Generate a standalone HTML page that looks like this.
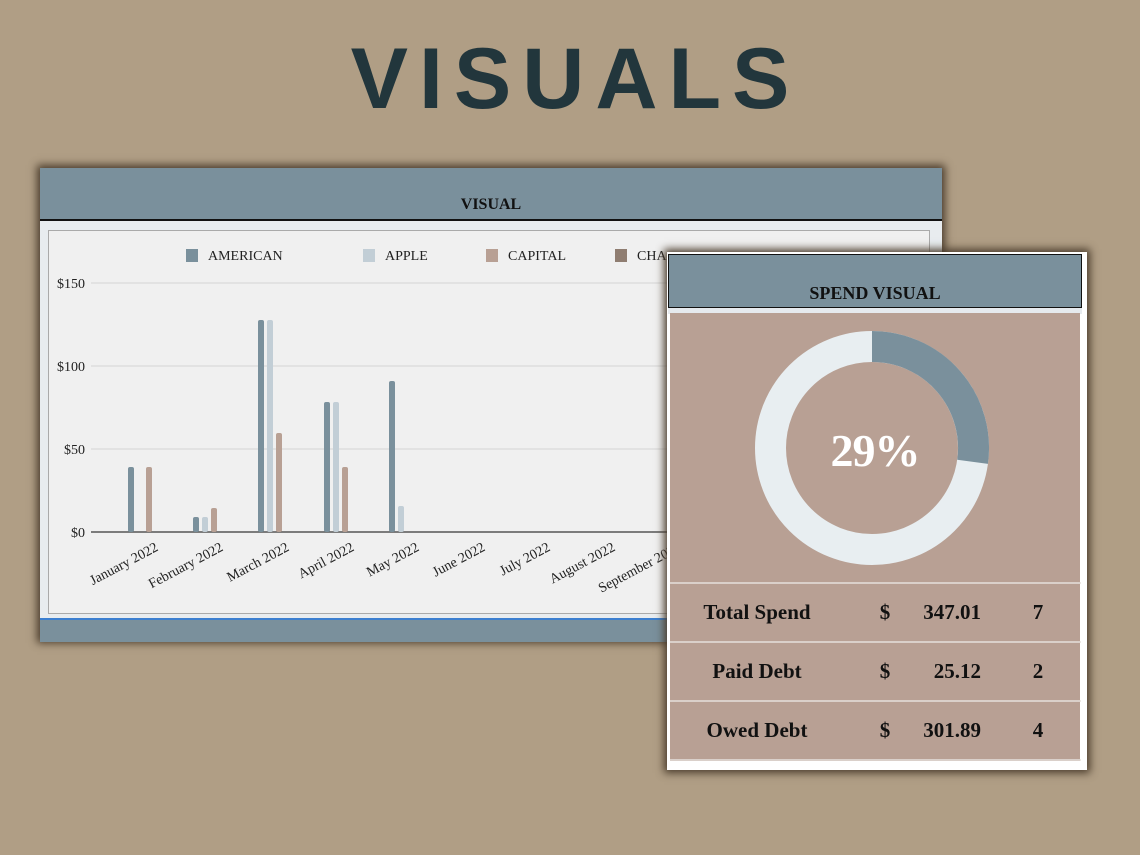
<!DOCTYPE html><html><head><style>
body{margin:0;width:1140px;height:855px;background:#b09e85;position:relative;overflow:hidden;font-family:"Liberation Serif",serif}
.t{position:absolute;left:0;width:1140px;top:30px;text-align:center;font:bold 86px "Liberation Sans",sans-serif;letter-spacing:11px;color:#22363c;padding-left:11px;box-sizing:border-box}
.p1{position:absolute;left:40px;top:168px;width:902px;height:472px;background:#e8ecef;box-shadow:0 0 8px 3px #4a3c2c}
.p2{position:absolute;left:667px;top:252px;width:420px;height:518px;background:#fff;box-shadow:0 0 8px 3px #4a3c2c}
</style></head><body>
<div class="t">VISUALS</div>
<div class="p1">
<div style="position:absolute;left:0;top:0;width:902px;height:51px;background:#7a909c;border-bottom:2px solid #111"></div>
<div style="position:absolute;left:0;top:28px;width:902px;text-align:center;font-weight:bold;font-size:16px;color:#111">VISUAL</div>
<div style="position:absolute;left:8px;top:62px;width:880px;height:382px;background:#f0f0f0;border:1px solid #aaa"></div>
<div style="position:absolute;left:0;top:450px;width:902px;height:22px;background:#7a909c;border-top:2px solid #3b7fd0"></div>
</div>
<svg style="position:absolute;left:0;top:0" width="1140" height="855" font-family="Liberation Serif, serif" font-size="14">
<g fill="#222">
<rect x="186" y="249" width="12" height="13" fill="#7a909c"/><text x="208" y="260">AMERICAN</text>
<rect x="363" y="249" width="12" height="13" fill="#c2ced6"/><text x="385" y="260">APPLE</text>
<rect x="486" y="249" width="12" height="13" fill="#b8a094"/><text x="508" y="260">CAPITAL</text>
<rect x="615" y="249" width="12" height="13" fill="#8f7d71"/><text x="637" y="260">CHA</text>
<text x="85" y="288" text-anchor="end">$150</text><text x="85" y="371" text-anchor="end">$100</text>
<text x="85" y="454" text-anchor="end">$50</text><text x="85" y="537" text-anchor="end">$0</text>
</g>
<g stroke="#d4d4d4"><line x1="91" y1="283" x2="670" y2="283"/><line x1="91" y1="366" x2="670" y2="366"/><line x1="91" y1="449" x2="670" y2="449"/></g>
<line x1="91" y1="532" x2="670" y2="532" stroke="#555" stroke-width="1.5"/>
<g fill="#7a909c"><rect x="128" y="467" width="6" height="65" rx="2"/><rect x="193" y="517" width="6" height="15" rx="2"/><rect x="258" y="320" width="6" height="212" rx="2"/><rect x="324" y="402" width="6" height="130" rx="2"/><rect x="389" y="381" width="6" height="151" rx="2"/></g>
<g fill="#c2ced6"><rect x="202" y="517" width="6" height="15" rx="2"/><rect x="267" y="320" width="6" height="212" rx="2"/><rect x="333" y="402" width="6" height="130" rx="2"/><rect x="398" y="506" width="6" height="26" rx="2"/></g>
<g fill="#b8a094"><rect x="146" y="467" width="6" height="65" rx="2"/><rect x="211" y="508" width="6" height="24" rx="2"/><rect x="276" y="433" width="6" height="99" rx="2"/><rect x="342" y="467" width="6" height="65" rx="2"/></g>
<g fill="#222">
<text transform="translate(159,550) rotate(-28)" text-anchor="end">January 2022</text>
<text transform="translate(224,550) rotate(-28)" text-anchor="end">February 2022</text>
<text transform="translate(290,550) rotate(-28)" text-anchor="end">March 2022</text>
<text transform="translate(355,550) rotate(-28)" text-anchor="end">April 2022</text>
<text transform="translate(420,550) rotate(-28)" text-anchor="end">May 2022</text>
<text transform="translate(486,550) rotate(-28)" text-anchor="end">June 2022</text>
<text transform="translate(551,550) rotate(-28)" text-anchor="end">July 2022</text>
<text transform="translate(616,550) rotate(-28)" text-anchor="end">August 2022</text>
<text transform="translate(682,550) rotate(-28)" text-anchor="end">September 2022</text>
</g>
</svg>
<div class="p2">
<div style="position:absolute;left:1px;top:2px;width:412px;height:52px;background:#7a909c;border:1px solid #111"></div>
<div style="position:absolute;left:0;top:31px;width:416px;text-align:center;font-weight:bold;font-size:18px;color:#111">SPEND VISUAL</div>
<div style="position:absolute;left:1px;top:56px;width:414px;height:6px;background:#e6eaee"></div>
<div style="position:absolute;left:3px;top:61px;width:410px;height:448px;background:#b8a094"></div>
</div>
<svg style="position:absolute;left:0;top:0" width="1140" height="855" font-family="Liberation Serif, serif">
<circle cx="872" cy="448" r="101.5" fill="none" stroke="#e8eef1" stroke-width="31"/>
<path d="M872 346.5 A101.5 101.5 0 0 1 972.6 461.8" fill="none" stroke="#7a909c" stroke-width="31"/>
<text x="875" y="466" text-anchor="middle" font-size="46" font-weight="bold" fill="#fff" letter-spacing="-1">29%</text>
<g stroke="#e6e0dc" stroke-width="1.5"><line x1="670" y1="583" x2="1081" y2="583"/><line x1="670" y1="642" x2="1081" y2="642"/><line x1="670" y1="701" x2="1081" y2="701"/><line x1="670" y1="760" x2="1081" y2="760"/></g>
<g font-size="21" font-weight="bold" fill="#111">
<text x="757" y="619" text-anchor="middle">Total Spend</text><text x="757" y="678" text-anchor="middle">Paid Debt</text><text x="757" y="737" text-anchor="middle">Owed Debt</text>
<text x="885" y="619" text-anchor="middle">$</text><text x="885" y="678" text-anchor="middle">$</text><text x="885" y="737" text-anchor="middle">$</text>
<text x="981" y="619" text-anchor="end">347.01</text><text x="981" y="678" text-anchor="end">25.12</text><text x="981" y="737" text-anchor="end">301.89</text>
<text x="1038" y="619" text-anchor="middle">7</text><text x="1038" y="678" text-anchor="middle">2</text><text x="1038" y="737" text-anchor="middle">4</text>
</g>
</svg>
</body></html>
